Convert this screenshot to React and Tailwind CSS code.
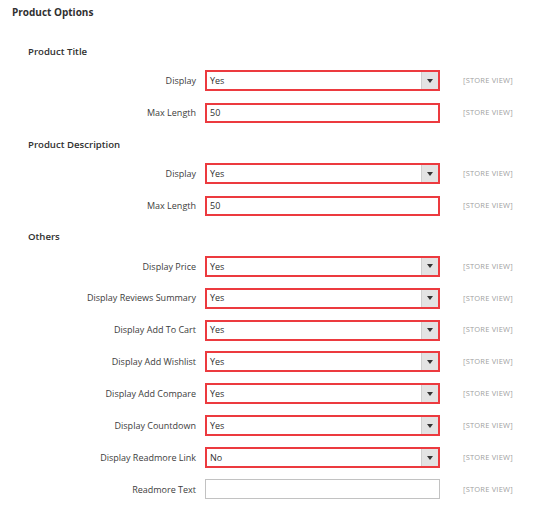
import React from 'react';

const sections = [
  {
    title: 'Product Title',
    rows: [
      { label: 'Display', type: 'select', value: 'Yes' },
      { label: 'Max Length', type: 'input', value: '50' },
    ],
  },
  {
    title: 'Product Description',
    rows: [
      { label: 'Display', type: 'select', value: 'Yes' },
      { label: 'Max Length', type: 'input', value: '50' },
    ],
  },
  {
    title: 'Others',
    rows: [
      { label: 'Display Price', type: 'select', value: 'Yes' },
      { label: 'Display Reviews Summary', type: 'select', value: 'Yes' },
      { label: 'Display Add To Cart', type: 'select', value: 'Yes' },
      { label: 'Display Add Wishlist', type: 'select', value: 'Yes' },
      { label: 'Display Add Compare', type: 'select', value: 'Yes' },
      { label: 'Display Countdown', type: 'select', value: 'Yes' },
      { label: 'Display Readmore Link', type: 'select', value: 'No' },
      { label: 'Readmore Text', type: 'input', value: '', plain: true },
    ],
  },
];

function Field({ row }) {
  const border = row.plain ? 'border border-[#c2c2c2]' : 'border-2 border-[#ec3a3f]';
  if (row.type === 'select') {
    return (
      <div className={`w-[235px] h-[21px] flex items-stretch bg-white ${border}`}>
        <div className="flex-1 flex items-center pl-[3px] text-[9px] text-[#303030]">{row.value}</div>
        <div className="w-[17px] flex items-center justify-center bg-[#e3e3e3] border-l border-[#cfcfcf]">
          <svg width="6" height="4" viewBox="0 0 6 4">
            <path d="M0 0h6L3 4z" fill="#333" />
          </svg>
        </div>
      </div>
    );
  }
  return (
    <div className={`w-[235px] h-[20px] flex items-center pl-[3px] bg-white text-[9px] text-[#303030] ${border}`}>
      {row.value}
    </div>
  );
}

export default function App() {
  return (
    <div className="w-[550px] h-[508px] bg-white overflow-hidden" style={{ fontFamily: '"Open Sans", sans-serif' }}>
      <div className="pt-[5px] pl-[12px] h-[19px] text-[10px] leading-[14px] font-bold text-[#303030]">
        Product Options
      </div>
      <div className="pt-[17px]">
        {sections.map((s) => (
          <div key={s.title} className="mt-[3px]">
            <div className="h-[26px] flex items-center pl-[28px] text-[9.6px] font-semibold text-[#303030]">
              {s.title}
            </div>
            {s.rows.map((row, i) => (
              <div key={i} className="h-[31.86px] flex items-center">
                <div className="w-[196px] text-right text-[9px] font-medium text-[#3d3d3d]">{row.label}</div>
                <div className="ml-[9px]">
                  <Field row={row} />
                </div>
                <div className="ml-[23px] text-[7.5px] text-[#9f9f9f] tracking-[0.2px]">[STORE VIEW]</div>
              </div>
            ))}
          </div>
        ))}
      </div>
    </div>
  );
}
